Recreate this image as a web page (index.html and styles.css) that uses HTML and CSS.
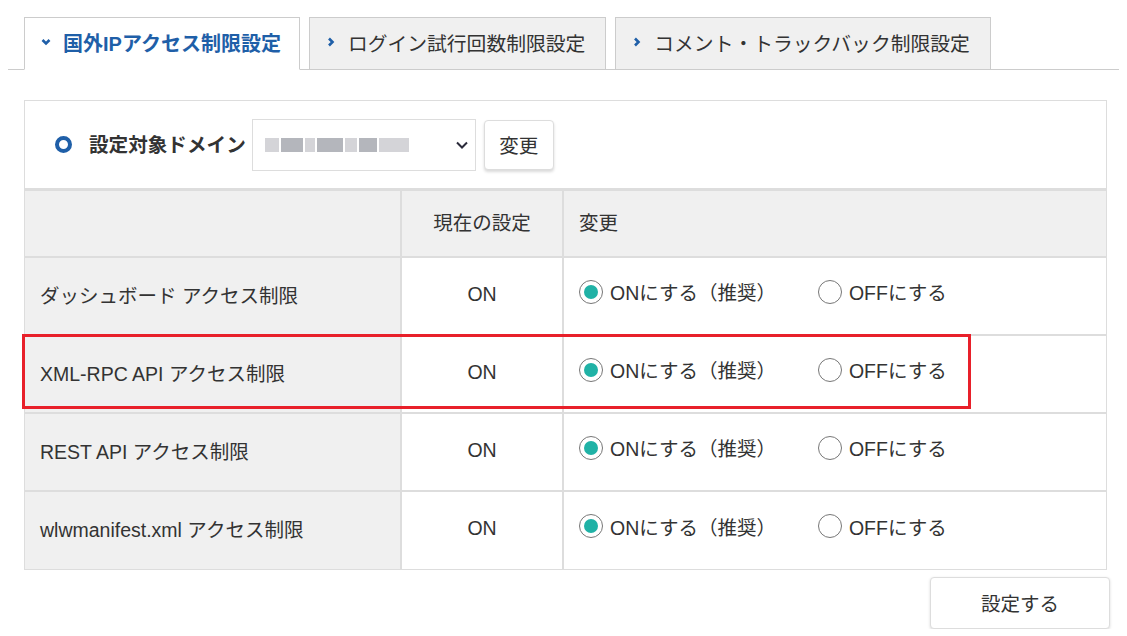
FILE: index.html
```html
<html>

<head>
  <title>アクセス制限設定</title>

  <link rel="stylesheet" href="styles.css">
</head>

<body>
  <ul class="tabs">
    <li class="tab active">
      <svg class="chev" width="10" height="10" viewBox="0 0 10 10"><path d="M1.5 3 L5 6.5 L8.5 3" fill="none" stroke="#1f5fa8" stroke-width="2.6"/></svg>
      国外IPアクセス制限設定
    </li>
    <li class="tab">
      <svg class="chev" width="10" height="10" viewBox="0 0 10 10"><path d="M3 1.5 L6.5 5 L3 8.5" fill="none" stroke="#1f5fa8" stroke-width="2.6"/></svg>
      ログイン試行回数制限設定
    </li>
    <li class="tab">
      <svg class="chev" width="10" height="10" viewBox="0 0 10 10"><path d="M3 1.5 L6.5 5 L3 8.5" fill="none" stroke="#1f5fa8" stroke-width="2.6"/></svg>
      コメント・トラックバック制限設定
    </li>
  </ul>

  <div class="panel">
    <div class="domain">
      <span class="ring"></span>
      <span class="domain-label">設定対象ドメイン</span>
      <div class="select">
        <div class="blur">
          <span style="width:14px"></span><span style="width:22px"></span><span style="width:10px"></span><span style="width:26px"></span><span style="width:12px"></span><span style="width:18px"></span><span style="width:30px"></span>
        </div>
        <svg width="14" height="10" viewBox="0 0 14 10"><path d="M2 2.5 L7 7.5 L12 2.5" fill="none" stroke="#2a2a3a" stroke-width="2"/></svg>
      </div>
      <button class="btn-change">変更</button>
    </div>

    <table class="settings">
      <tr class="head">
        <th class="name"></th>
        <th class="current">現在の設定</th>
        <th class="change">変更</th>
      </tr>
      <tr>
        <td class="name">ダッシュボード アクセス制限</td>
        <td class="current">ON</td>
        <td class="change">
          <div class="options">
            <label class="radio"><span class="dot on"></span>ONにする（推奨）</label>
            <label class="radio"><span class="dot"></span>OFFにする</label>
          </div>
        </td>
      </tr>
      <tr class="marked">
        <td class="name">XML-RPC API アクセス制限</td>
        <td class="current">ON</td>
        <td class="change">
          <div class="options">
            <label class="radio"><span class="dot on"></span>ONにする（推奨）</label>
            <label class="radio"><span class="dot"></span>OFFにする</label>
          </div>
          <div class="redbox"></div>
        </td>
      </tr>
      <tr>
        <td class="name">REST API アクセス制限</td>
        <td class="current">ON</td>
        <td class="change">
          <div class="options">
            <label class="radio"><span class="dot on"></span>ONにする（推奨）</label>
            <label class="radio"><span class="dot"></span>OFFにする</label>
          </div>
        </td>
      </tr>
      <tr>
        <td class="name">wlwmanifest.xml アクセス制限</td>
        <td class="current">ON</td>
        <td class="change">
          <div class="options">
            <label class="radio"><span class="dot on"></span>ONにする（推奨）</label>
            <label class="radio"><span class="dot"></span>OFFにする</label>
          </div>
        </td>
      </tr>
    </table>
  </div>

  <div class="actions">
    <button class="btn-submit">設定する</button>
  </div>
</body>

</html>
```

FILE: styles.css
```css
body {
  margin: 8px;
  font-family: "Liberation Sans", "Noto Sans CJK JP", sans-serif;
  color: #333;
  background: #fff;
}

.tabs {
  display: flex;
  gap: 9px;
  margin: 9px 0 0;
  padding: 0 0 0 16px;
  border-bottom: 1px solid #ccc;
  list-style: none;
}

.tab {
  display: flex;
  align-items: center;
  gap: 12px;
  height: 53px;
  padding: 0 20px 3px 16px;
  box-sizing: border-box;
  margin-bottom: -1px;
  border: 1px solid #ccc;
  background: #f0f0f0;
  font-size: 19.8px;
  color: #333;
}

.tab.active {
  background: #fff;
  border-bottom-color: #fff;
  color: #1f5fa8;
  font-weight: bold;
  font-size: 20px;
  padding-right: 18px;
}

.chev {
  flex: none;
}

.panel {
  margin: 30px 0 0 16px;
  width: 1083px;
  border: 1px solid #ddd;
  box-sizing: border-box;
}

.domain {
  display: flex;
  align-items: center;
  height: 87px;
  padding-left: 30px;
}

.ring {
  width: 9px;
  height: 9px;
  border: 4px solid #1f5fa8;
  border-radius: 50%;
  margin-right: 17px;
}

.domain-label {
  font-size: 19.6px;
  font-weight: bold;
  margin-right: 6px;
  padding-bottom: 2px;
}

.select {
  display: flex;
  align-items: center;
  justify-content: space-between;
  width: 224px;
  height: 52px;
  box-sizing: border-box;
  border: 1px solid #ddd;
  padding: 0 6px 0 12px;
}

.blur {
  display: flex;
  height: 14px;
  gap: 2px;
  filter: blur(0.6px);
}

.blur span {
  background: #d4d4d8;
}

.blur span:nth-child(2n) {
  background: #b4b6bc;
}

.btn-change {
  margin-left: 8px;
  width: 70px;
  height: 50px;
  border: 1px solid #ddd;
  border-radius: 4px;
  background: #fff;
  box-shadow: 0 2px 3px rgba(0, 0, 0, 0.15);
  font-family: inherit;
  font-size: 19.5px;
  color: #333;
}

.settings {
  width: 100%;
  border-collapse: collapse;
  font-size: 19.5px;
}

.settings th,
.settings td {
  border: 2px solid #ddd;
  font-weight: normal;
  height: 78px;
  padding: 0 0 3px;
}

.settings tr:first-child th {
  border-top-width: 3px;
}

.settings .head th {
  height: 67px;
  background: #f0f0f0;
}

.settings tr > :first-child {
  border-left: none;
}

.settings tr > :last-child {
  border-right: none;
}

.settings tr:last-child td {
  border-bottom: none;
}

.settings .name {
  width: 376px;
  background: #f0f0f0;
  text-align: left;
  padding-left: 15px;
  box-sizing: border-box;
}

.settings .current {
  width: 160px;
  text-align: center;
}

.settings .change {
  text-align: left;
  padding-left: 15px;
  position: relative;
}

.options {
  display: flex;
  align-items: center;
  gap: 42px;
  padding-bottom: 5px;
}

.radio {
  display: flex;
  align-items: center;
  gap: 7px;
}

.dot {
  width: 24px;
  height: 24px;
  box-sizing: border-box;
  border: 1px solid #777;
  border-radius: 50%;
  background: #fff;
  display: flex;
  align-items: center;
  justify-content: center;
}

.dot.on::after {
  content: "";
  width: 14px;
  height: 14px;
  border-radius: 50%;
  background: #20b2a6;
}

.redbox {
  position: absolute;
  left: -542px;
  top: -2px;
  width: 949px;
  height: 75px;
  box-sizing: border-box;
  border: 3px solid #e8202a;
}

.actions {
  display: flex;
  justify-content: flex-end;
  width: 1102px;
  margin-top: 7px;
}

.btn-submit {
  width: 180px;
  height: 52px;
  border: 1px solid #ddd;
  border-radius: 4px;
  background: #fff;
  box-shadow: 0 1px 3px rgba(0, 0, 0, 0.15);
  font-family: inherit;
  font-size: 19.5px;
  color: #333;
}
```
